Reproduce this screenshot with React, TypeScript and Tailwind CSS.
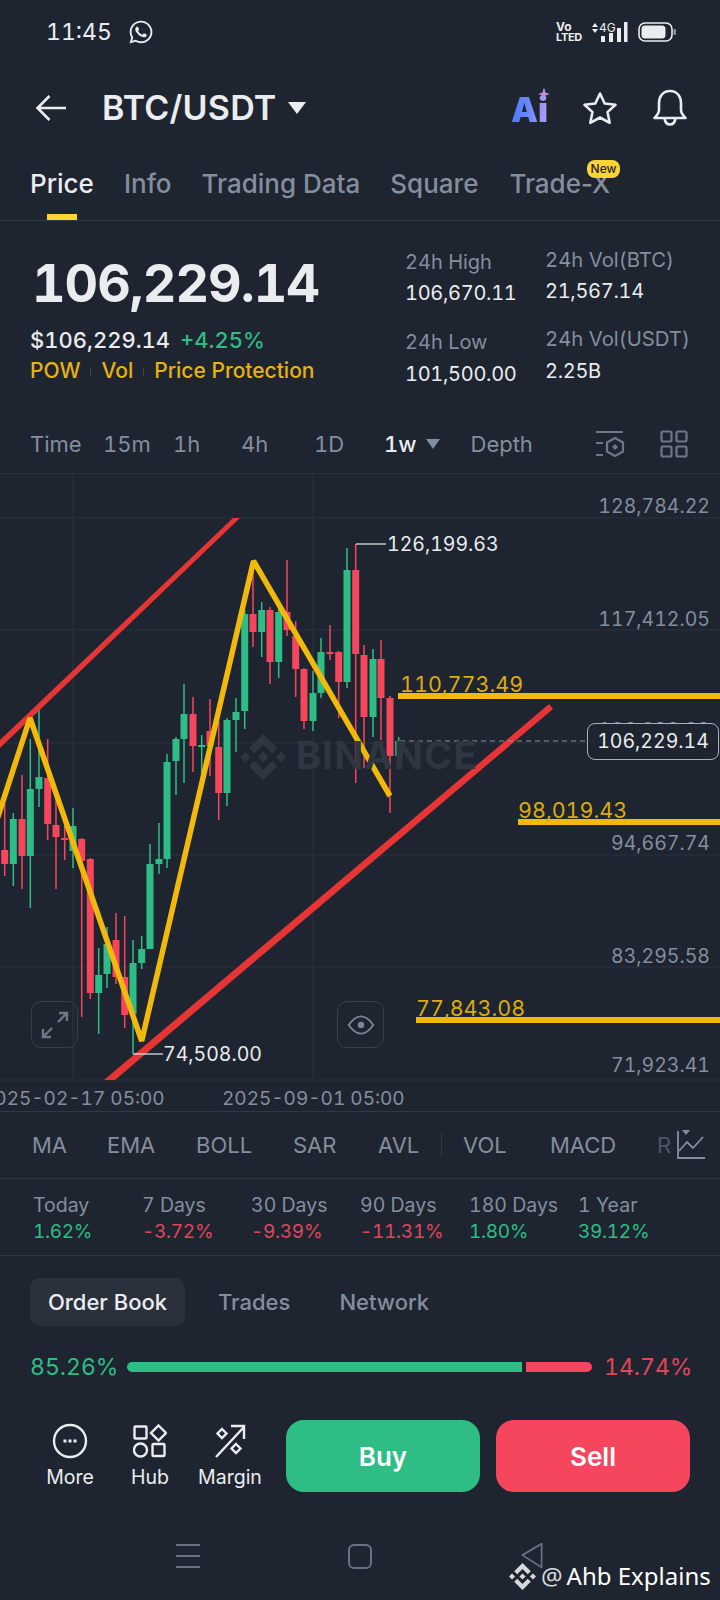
import React from "react";
import { FaWhatsapp } from "react-icons/fa";

const G = "#2ebd85";
const R = "#f6465d";
type C = [number, number, number, number, number, 0 | 1];
const candles: C[] = [
  [4.7, 802, 849, 863, 875, 1],
  [13.3, 812, 818, 863, 885, 0],
  [22, 774, 818, 855, 888, 1],
  [30.3, 738, 788, 855, 907, 0],
  [39, 709, 776, 788, 806, 0],
  [47.7, 738, 777, 823, 839, 1],
  [56, 790, 824, 836, 888, 1],
  [64.7, 813, 837, 839, 859, 1],
  [73, 807, 825, 850, 867, 0],
  [81.7, 837, 838, 860, 1016, 1],
  [90.3, 857, 858, 992, 998, 1],
  [98.7, 947, 974, 992, 1033, 0],
  [107, 926, 943, 973, 987, 0],
  [116, 912, 939, 976, 983, 1],
  [124.7, 915, 976, 1014, 1027, 1],
  [133, 939, 962, 1013, 1053, 0],
  [141.7, 935, 948, 962, 968, 0],
  [150, 843, 863, 948, 948, 0],
  [159, 822, 858, 863, 873, 0],
  [167, 753, 761, 858, 867, 0],
  [176, 736, 738, 760, 794, 0],
  [184, 683, 713, 738, 782, 0],
  [193, 696, 713, 745, 771, 1],
  [201.7, 734, 744, 746, 787, 0],
  [210, 698, 730, 745, 775, 1],
  [218.7, 720, 746, 792, 819, 1],
  [227, 717, 719, 792, 805, 0],
  [236, 697, 711, 719, 751, 0],
  [244.7, 609, 613, 710, 728, 0],
  [253, 570, 613, 631, 646, 1],
  [261.7, 601, 609, 631, 656, 0],
  [270, 606, 609, 661, 683, 1],
  [278.7, 607, 611, 661, 677, 0],
  [287, 559, 611, 629, 635, 1],
  [295.7, 620, 635, 668, 696, 1],
  [304, 667, 668, 720, 728, 1],
  [313, 670, 692, 720, 730, 0],
  [321, 637, 651, 692, 697, 0],
  [330, 624, 651, 653, 659, 1],
  [338.7, 650, 651, 681, 717, 1],
  [347, 547, 569, 681, 687, 0],
  [355.7, 543, 569, 653, 782, 1],
  [364, 644, 654, 716, 767, 1],
  [373, 648, 658, 716, 736, 0],
  [381, 639, 658, 697, 739, 1],
  [390, 695, 697, 755, 812, 1],
  [398.7, 736, 740, 755, 759, 0],
];

const logo =
  "M38.73 53.2l24.59-24.58 24.6 24.6 14.3-14.31L63.32 0 24.43 38.9zM0 63.31l14.3-14.31 14.31 14.31-14.31 14.3zM38.73 73.41l24.59 24.59 24.6-24.6 14.31 14.29-38.9 38.91-38.91-38.88zM98 63.31l14.3-14.31 14.31 14.3-14.31 14.32zM77.83 63.3L63.32 48.78 52.59 59.51l-1.24 1.23-2.54 2.54 14.51 14.5 14.51-14.47z";

function Chart() {
  return (
    <div className="relative h-[638px] overflow-hidden border-t border-[#2b313c]">
      <svg viewBox="0 473 720 638" className="absolute inset-0 h-[638px] w-[720px]">
        {[517, 629, 742, 854, 966, 1079].map((y) => (
          <line key={y} x1="0" x2="720" y1={y} y2={y} stroke="#2b313c" strokeWidth="1.2" />
        ))}
        {[73, 313].map((x) => (
          <line key={x} x1={x} x2={x} y1="473" y2="1079" stroke="#2b313c" strokeWidth="1.2" />
        ))}
        <g fill="#2f3641">
          <g transform="translate(240 733) scale(0.365)">
            <path d={logo} />
          </g>
        </g>
        {candles.map(([x, wt, bt, bb, wb, red], i) => (
          <g key={i} fill={red ? R : G}>
            <rect x={x - 0.75} y={wt} width="1.5" height={wb - wt} />
            <rect x={x - 3.5} y={bt} width="7" height={Math.max(bb - bt, 1.5)} />
          </g>
        ))}
        <polygon points="0,739 233,517 240,517 0,747" fill="#e63535" />
        <polyline
          points="-10,840 30,717 141.7,1040 253.5,560 390,795"
          fill="none"
          stroke="#f0b90b"
          strokeWidth="5.5"
          strokeLinejoin="bevel"
        />
        <polygon points="104,1079 549,703 553,708 115,1079" fill="#e63535" />
        <rect x="398" y="692" width="322" height="6" fill="#f0b90b" />
        <rect x="518" y="818" width="202" height="6" fill="#f0b90b" />
        <rect x="416" y="1016" width="304" height="6" fill="#f0b90b" />
        <line x1="400" x2="587" y1="740" y2="740" stroke="#8b929e" strokeWidth="1.2" strokeDasharray="5 4" />
        <polyline points="356,543 386,543" fill="none" stroke="#eaecef" strokeWidth="1.2" />
        <polyline points="133,1053 163,1053" fill="none" stroke="#eaecef" strokeWidth="1.2" />
      </svg>

      <div className="absolute left-[296px] top-[262px] text-[38px] font-bold leading-[38px] tracking-[1.2px] text-[#2f3641]">
        BINANCE
      </div>

      <span className="absolute right-[10px] top-[20px] text-[19.5px] leading-[24px] text-[#848e9c]">128,784.22</span>
      <span className="absolute right-[10px] top-[133px] text-[19.5px] leading-[24px] text-[#848e9c]">117,412.05</span>
      <span className="absolute right-[10px] top-[244px] text-[19.5px] leading-[24px] text-[#848e9c]">106,039.89</span>
      <span className="absolute right-[10px] top-[357px] text-[19.5px] leading-[24px] text-[#848e9c]">94,667.74</span>
      <span className="absolute right-[10px] top-[470px] text-[19.5px] leading-[24px] text-[#848e9c]">83,295.58</span>
      <span className="absolute right-[10px] top-[579px] text-[19.5px] leading-[24px] text-[#848e9c]">71,923.41</span>

      <div className="absolute left-[587px] top-[249px] flex h-[37px] w-[132px] items-center justify-center rounded-[8px] border border-[#aab0ba] bg-[#1e2530] text-[19.5px] text-[#eaecef]">
        106,229.14
      </div>

      <span className="absolute left-[400px] top-[198px] text-[21.5px] leading-[24px] text-[#dcaa10]">110,773.49</span>
      <span className="absolute left-[518px] top-[324px] text-[21.5px] leading-[24px] text-[#dcaa10]">98,019.43</span>
      <span className="absolute left-[416px] top-[522px] text-[21.5px] leading-[24px] text-[#dcaa10]">77,843.08</span>
      <span className="absolute left-[387px] top-[58px] text-[19.5px] leading-[24px] text-[#eaecef]">126,199.63</span>
      <span className="absolute left-[163px] top-[568px] text-[19.5px] leading-[24px] text-[#eaecef]">74,508.00</span>
      <span className="absolute left-[-18px] top-[613px] whitespace-nowrap text-[19px] leading-[24px] text-[#848e9c]">2025-02-17 05:00</span>
      <span className="absolute left-[222px] top-[613px] whitespace-nowrap text-[19px] leading-[24px] text-[#848e9c]">2025-09-01 05:00</span>

      <div className="absolute left-[31px] top-[527px] flex h-[47px] w-[47px] items-center justify-center rounded-[10px] border border-[#383e4a]">
        <svg width="30" height="30" viewBox="0 0 30 30" fill="none" stroke="#6f7785" strokeWidth="2.4">
          <path d="M18 12 L27 3 M19 3 H27 V11 M12 18 L3 27 M3 19 V27 H11" />
        </svg>
      </div>
      <div className="absolute left-[337px] top-[527px] flex h-[47px] w-[47px] items-center justify-center rounded-[10px] border border-[#383e4a]">
        <svg width="30" height="20" viewBox="0 0 30 22" fill="none" stroke="#7d8592" strokeWidth="2">
          <path d="M1.5 11 C7 3 11 1.5 15 1.5 S23 3 28.5 11 C23 19 19 20.5 15 20.5 S7 19 1.5 11 Z" />
          <circle cx="15" cy="11" r="3.5" fill="#7d8592" stroke="none" />
        </svg>
      </div>
    </div>
  );
}

function Stat({ label, value, green }: { label: string; value: string; green: boolean }) {
  return (
    <div className="w-[109px] shrink-0">
      <div className="whitespace-nowrap text-[19.5px] leading-[26px] text-[#848e9c]">{label}</div>
      <div className={`whitespace-nowrap text-[19px] leading-[28px] tracking-[-0.3px] ${green ? "text-[#2ebd85]" : "text-[#e0455a]"}`}>{value}</div>
    </div>
  );
}

export default function App() {
  return (
    <div className="flex h-[1600px] w-[720px] flex-col overflow-hidden bg-[#1e2530] font-[Inter,sans-serif] tabular-nums text-[#eaecef]">
      {/* Status bar */}
      <div className="flex h-[64px] shrink-0 items-center pl-[46px] pr-[44px]">
        <span className="text-[23px] font-normal">11:45</span>
        <FaWhatsapp className="ml-[16px] text-[26px]" />
        <div className="ml-auto flex items-center gap-[8px]">
          <div className="flex flex-col text-[11px] font-bold leading-[11px]">
            <span className="text-[12px]">Vo</span>
            <span className="tracking-[-0.3px]">LTED</span>
          </div>
          <div className="flex items-end">
            <svg width="38" height="22" viewBox="0 0 38 22" fill="#eaecef">
              <path d="M2 6 L5 2 L8 6Z M2 8 L5 12 L8 8Z" />
              <rect x="11" y="15" width="4" height="6" />
              <rect x="19" y="12" width="4" height="9" />
              <rect x="27" y="7" width="4" height="14" />
              <rect x="34" y="1" width="3.5" height="20" />
              <text x="9" y="11" fontSize="12" fill="#eaecef">4G</text>
            </svg>
          </div>
          <svg width="38" height="20" viewBox="0 0 38 20" className="ml-[2px]">
            <rect x="1" y="1" width="33" height="18" rx="6" fill="none" stroke="#eaecef" strokeWidth="1.6" />
            <rect x="3.5" y="3.5" width="24" height="13" rx="3.5" fill="#eaecef" />
            <rect x="35.5" y="7" width="2.5" height="6" rx="1" fill="#8b929e" />
          </svg>
        </div>
      </div>

      {/* Header */}
      <div className="flex h-[88px] shrink-0 items-center pl-[35px] pr-[32px]">
        <svg width="32" height="28" viewBox="0 0 32 28" fill="none" stroke="#eaecef" strokeWidth="2.6">
          <path d="M31 14 H3 M14.5 2 L2.5 14 L14.5 26" />
        </svg>
        <span className="ml-[35px] text-[34px] font-semibold leading-none tracking-[0.2px]">BTC/USDT</span>
        <svg width="18" height="12" viewBox="0 0 18 12" fill="#eaecef" className="ml-[12px]">
          <path d="M0 0 H18 L9 12 Z" />
        </svg>
        <div className="relative ml-auto flex h-[40px] w-[38px] items-end">
          <span className="bg-gradient-to-r from-[#4d78ff] via-[#6d88fb] to-[#b79cf5] bg-clip-text text-[34px] font-black leading-[36px] text-transparent">
            Ai
          </span>
          <svg width="12" height="14" viewBox="0 0 12 14" className="absolute right-[-1px] top-[-1px]">
            <path d="M6 0 L7.5 5.5 L12 7 L7.5 8.5 L6 14 L4.500 8.500 L0 7 L4.500 5.500 Z" fill="#a98ff0" />
            <circle cx="6" cy="7" r="1.500" fill="#f2889a" />
          </svg>
        </div>
        <svg width="36" height="34" viewBox="0 0 36 34" fill="none" stroke="#eaecef" strokeWidth="2.600" strokeLinejoin="round" className="ml-[33px]">
          <path d="M18 2.500 L22.700 12.500 L33.500 13.800 L25.500 21.100 L27.700 31.800 L18 26.500 L8.300 31.800 L10.500 21.100 L2.500 13.800 L13.300 12.500 Z" />
        </svg>
        <svg width="36" height="38" viewBox="0 0 36 38" fill="none" stroke="#eaecef" strokeWidth="2.600" strokeLinejoin="round" className="ml-[34px]">
          <path d="M18 2 C10.500 2 7 8 7 14 V21 C7 24.500 5 26.500 2.500 29 H33.500 C31 26.500 29 24.500 29 21 V14 C29 8 25.500 2 18 2 Z" />
          <path d="M12.500 29 C13 33 15 35.500 18 35.500 S23 33 23.500 29" />
        </svg>
      </div>

      {/* Tabs */}
      <div className="relative h-[69px] shrink-0 border-b border-[#323843]">
        <div className="flex h-[62px] items-center gap-[30px] pl-[30px] text-[26px] font-medium normal-nums text-[#848e9c]">
          <span className="text-[#eaecef]">Price</span>
          <span>Info</span>
          <span>Trading Data</span>
          <span>Square</span>
          <span className="ml-[1px]">Trade-X</span>
        </div>
        <div className="absolute left-[587px] top-[8px] flex h-[18px] w-[33px] items-center justify-center rounded-[8px] bg-[#fcd535] text-[12px] font-medium text-[#1e2530]">
          New
        </div>
        <div className="absolute bottom-0 left-[47px] h-[6px] w-[30px] bg-[#fcd535]" />
      </div>

      {/* Summary */}
      <div className="flex h-[189px] shrink-0">
        <div className="w-[405px] shrink-0 pl-[30px]">
          <div className="mt-[33px] pl-[2px] text-[52px] font-bold leading-[60px] tracking-[-1px]">106,229.14</div>
          <div className="mt-[12px] flex items-center gap-[10px] text-[22px] font-medium leading-[28px]">
            <span>$106,229.14</span>
            <span className="text-[#2ebd85]">+4.25%</span>
          </div>
          <div className="mt-[3px] flex items-center text-[21px] font-medium leading-[28px] text-[#e8b210]">
            <span>POW</span>
            <span className="mx-[10px] h-[9px] w-px bg-[#3c424e]" />
            <span>Vol</span>
            <span className="mx-[10px] h-[9px] w-px bg-[#3c424e]" />
            <span>Price Protection</span>
          </div>
        </div>
        <div className="w-[140px] shrink-0 pt-[27px]">
          <div className="text-[20px] leading-[28px] text-[#848e9c]">24h High</div>
          <div className="mt-[3px] text-[20px] leading-[28px] tracking-[-0.3px]">106,670.11</div>
          <div className="mt-[21px] text-[20px] leading-[28px] text-[#848e9c]">24h Low</div>
          <div className="mt-[4px] text-[20px] leading-[28px] tracking-[-0.3px]">101,500.00</div>
        </div>
        <div className="pt-[25px]">
          <div className="text-[20.3px] leading-[28px] text-[#848e9c]">24h Vol(BTC)</div>
          <div className="mt-[3px] text-[20px] leading-[28px] tracking-[-0.3px]">21,567.14</div>
          <div className="mt-[20px] text-[20.3px] leading-[28px] text-[#848e9c]">24h Vol(USDT)</div>
          <div className="mt-[4px] text-[20px] leading-[28px] tracking-[-0.3px]">2.25B</div>
        </div>
      </div>

      {/* Time row */}
      <div className="flex h-[63px] shrink-0 items-center pl-[30px] pt-[5px] text-[22px] text-[#848e9c]">
        <span className="w-[73px]">Time</span>
        <span className="w-[70px]">15m</span>
        <span className="w-[68px]">1h</span>
        <span className="w-[73px]">4h</span>
        <span className="w-[70px]">1D</span>
        <span className="font-medium text-[#eaecef]">1w</span>
        <svg width="14" height="10" viewBox="0 0 14 10" fill="#848e9c" className="ml-[9px]">
          <path d="M0 0 H14 L7 10 Z" />
        </svg>
        <span className="ml-[31px]">Depth</span>
        <svg width="30" height="28" viewBox="0 0 30 28" fill="none" stroke="#6f7785" strokeWidth="2.200" className="ml-[62px]">
          <path d="M1 2 H28 M1 13 H8 M1 25 H8" />
          <path d="M20 8 L28 12.500 V21.500 L20 26 L12 21.500 V12.500 Z" />
          <path d="M20 14 L23 17 L20 20 L17 17 Z" fill="#6f7785" stroke="none" />
        </svg>
        <svg width="28" height="28" viewBox="0 0 28 28" fill="none" stroke="#6f7785" strokeWidth="2.200" className="ml-[35px]">
          <rect x="1.500" y="1.500" width="10" height="10" rx="1.500" />
          <rect x="16.500" y="1.500" width="10" height="10" rx="1.500" />
          <rect x="1.500" y="16.500" width="10" height="10" rx="1.500" />
          <rect x="16.500" y="16.500" width="10" height="10" rx="1.500" />
        </svg>
      </div>

      <Chart />

      {/* Indicators */}
      <div className="flex h-[67px] shrink-0 items-center border-t border-[#323843] pl-[32px] text-[22px] text-[#848e9c]">
        <span className="w-[75px]">MA</span>
        <span className="w-[89px]">EMA</span>
        <span className="w-[97px]">BOLL</span>
        <span className="w-[85px]">SAR</span>
        <span className="w-[63px]">AVL</span>
        <span className="mr-[21px] h-[24px] w-px bg-[#323843]" />
        <span className="w-[87px]">VOL</span>
        <span className="w-[107px]">MACD</span>
        <span className="w-[19px] text-[#4e5562]">R</span>
        <svg width="30" height="30" viewBox="0 0 30 30" fill="none" stroke="#848e9c" strokeWidth="1.800">
          <path d="M2 1 V28 H29 M3 21 L11 12 L17 18 L27 7" />
          <path d="M6 0 H14 L10 5 Z" fill="#848e9c" stroke="none" />
        </svg>
      </div>

      {/* Periods */}
      <div className="flex h-[78px] shrink-0 items-center border-y border-[#323843] pl-[33px] pt-[3px]">
        <Stat label="Today" value="1.62%" green />
        <Stat label="7 Days" value="-3.72%" green={false} />
        <Stat label="30 Days" value="-9.39%" green={false} />
        <Stat label="90 Days" value="-11.31%" green={false} />
        <Stat label="180 Days" value="1.80%" green />
        <Stat label="1 Year" value="39.12%" green />
      </div>

      {/* Order book */}
      <div className="mt-[22px] flex h-[48px] shrink-0 items-center pl-[30px] text-[22px] font-medium text-[#848e9c]">
        <span className="flex h-[48px] w-[155px] items-center justify-center rounded-[10px] bg-[#2b313c] text-[#eaecef]">Order Book</span>
        <span className="ml-[33px]">Trades</span>
        <span className="ml-[49px]">Network</span>
      </div>

      <div className="mt-[21px] flex h-[40px] shrink-0 items-center pl-[30px] text-[23px]">
        <span className="w-[97px] shrink-0 text-[#2ebd85]">85.26%</span>
        <div className="h-[10px] w-[395px] shrink-0 rounded-l-full bg-[#2ebd85]" />
        <div className="ml-[4px] h-[10px] w-[66px] shrink-0 rounded-r-full bg-[#f6465d]" />
        <span className="ml-[12px] shrink-0 whitespace-nowrap text-[#e0455a]">14.74%</span>
      </div>

      {/* Actions */}
      <div className="mt-[33px] flex h-[72px] shrink-0 items-start">
        <div className="flex w-[100px] flex-col items-center pl-[40px] pt-[3px]">
          <svg width="36" height="36" viewBox="0 0 36 36" fill="none" stroke="#eaecef" strokeWidth="2.400">
            <circle cx="18" cy="18" r="16" />
            <path d="M11.500 16.500 h3 v3 h-3z M16.500 16.500 h3 v3 h-3z M21.500 16.500 h3 v3 h-3z" fill="#eaecef" stroke="none" />
          </svg>
          <span className="mt-[5px] whitespace-nowrap text-[19.5px] leading-[26px]">More</span>
        </div>
        <div className="flex w-[100px] flex-col items-center pt-[4px]">
          <svg width="34" height="34" viewBox="0 0 34 34" fill="none" stroke="#eaecef" strokeWidth="2.400">
            <rect x="1.500" y="2.500" width="12" height="12" rx="1" />
            <path d="M25.500 1.500 L33 9 L25.500 16.500 L18 9 Z" />
            <circle cx="7.500" cy="26" r="6.500" />
            <rect x="19.500" y="20" width="12" height="12" rx="1" />
          </svg>
          <span className="mt-[6px] whitespace-nowrap text-[19.5px] leading-[26px]">Hub</span>
        </div>
        <div className="ml-[-20px] flex w-[100px] flex-col items-center pt-[4px]">
          <svg width="32" height="34" viewBox="0 0 32 34" fill="none" stroke="#eaecef" strokeWidth="2.400">
            <path d="M2 33 L30 3 M17 2 H30 V15" />
            <path d="M8 5 L12.500 9.500 L8 14 L3.500 9.500 Z" />
            <path d="M22 20 L26.500 24.500 L22 29 L17.500 24.500 Z" />
          </svg>
          <span className="mt-[6px] whitespace-nowrap text-[19.5px] leading-[26px]">Margin</span>
        </div>
        <button className="ml-[6px] flex h-[72px] w-[194px] items-center justify-center rounded-[18px] bg-[#2ebd85] text-[26px] font-semibold text-white">Buy</button>
        <button className="ml-[16px] flex h-[72px] w-[194px] items-center justify-center rounded-[18px] bg-[#f6465d] text-[26px] font-semibold text-white">Sell</button>
      </div>

      {/* Nav */}
      <div className="relative mt-[48px] flex h-[32px] shrink-0 items-center">
        <svg width="26" height="26" viewBox="0 0 26 26" stroke="#6a7280" strokeWidth="2" className="ml-[175px]">
          <path d="M1 2 H25 M1 13 H25 M1 24 H25" />
        </svg>
        <svg width="24" height="25" viewBox="0 0 24 25" fill="none" stroke="#6a7280" strokeWidth="2" className="ml-[147px]">
          <rect x="1" y="1" width="22" height="23" rx="5" />
        </svg>
        <svg width="26" height="28" viewBox="0 0 26 32" fill="none" stroke="#6a7280" strokeWidth="2" className="ml-[147px]" strokeLinejoin="round">
          <path d="M24 2 L24 29 L2 15 Z" />
        </svg>
        <div className="absolute left-[509px] top-[20px] flex items-center font-['Noto_Sans',sans-serif] text-white">
          <svg width="27" height="27" viewBox="0 0 126.610 126.610" fill="#d5d8dc">
            <path d={logo} />
          </svg>
          <span className="ml-[5px] text-[24px] leading-[32px] text-[#d5d8dc]">@</span>
          <span className="ml-[4px] whitespace-nowrap text-[24px] leading-[32px]">Ahb Explains</span>
        </div>
      </div>
    </div>
  );
}
